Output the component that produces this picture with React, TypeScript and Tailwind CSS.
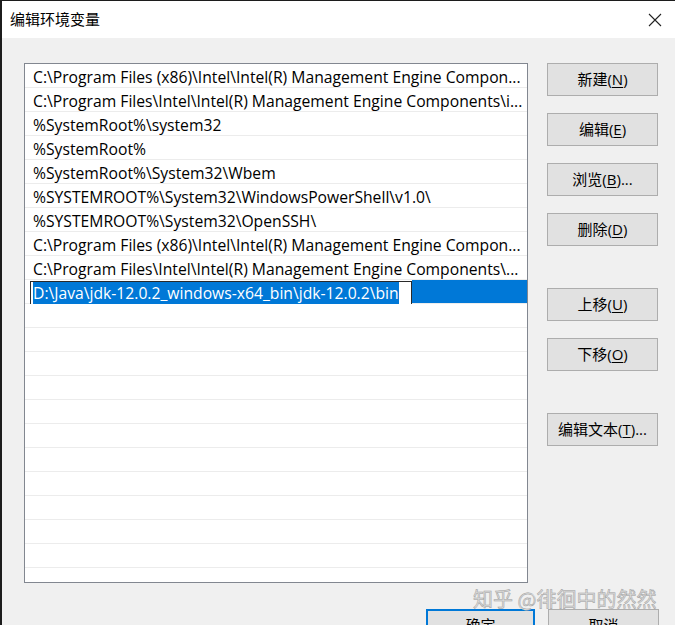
import React from 'react';

const paths = [
  'C:\\Program Files (x86)\\Intel\\Intel(R) Management Engine Compon...',
  'C:\\Program Files\\Intel\\Intel(R) Management Engine Components\\i...',
  '%SystemRoot%\\system32',
  '%SystemRoot%',
  '%SystemRoot%\\System32\\Wbem',
  '%SYSTEMROOT%\\System32\\WindowsPowerShell\\v1.0\\',
  '%SYSTEMROOT%\\System32\\OpenSSH\\',
  'C:\\Program Files (x86)\\Intel\\Intel(R) Management Engine Compon...',
  'C:\\Program Files\\Intel\\Intel(R) Management Engine Components\\...',
];

const font = { fontFamily: '"Open Sans", "Noto Sans CJK SC", sans-serif' };

function WinButton({ label, accel, tail = '', className = '' }: { label: string; accel: string; tail?: string; className?: string }) {
  return (
    <button
      className={`h-[33px] w-[111px] border border-[#adadad] bg-[#e1e1e1] text-[15px] text-black ${className}`}
    >
      {label}(<span className="underline underline-offset-2">{accel}</span>){tail}
    </button>
  );
}

export default function App() {
  return (
    <div
      className="relative w-[675px] h-[625px] overflow-hidden border-l-2 border-t border-[#1c1c1c] bg-[#f0f0f0]"
      style={font}
    >
      {/* title bar */}
      <div className="h-[37px] bg-white flex items-center justify-between pl-[8px] pr-[12px]">
        <span className="text-[15px] text-black">编辑环境变量</span>
        <svg width="14" height="14" viewBox="0 0 14 14" className="mr-[1px]">
          <path d="M1 1 L13 13 M13 1 L1 13" stroke="#222" strokeWidth="1.1" />
        </svg>
      </div>

      <div className="flex pl-[22px] pt-[25px]">
        {/* path list */}
        <div className="w-[504px] h-[520px] border border-[#828790] bg-white overflow-hidden">
          {paths.map((p, i) => (
            <div
              key={i}
              className="h-[24px] border-b border-[#ececec] pl-[8px] pt-[4px] flex items-center text-[15.7px] text-black whitespace-nowrap overflow-hidden"
            >
              {p}
            </div>
          ))}
          <div className="h-[24px] flex border-b border-[#ececec]">
            <div className="w-[5px] bg-white" />
            <div className="h-[23px] mt-[1px] border border-[#2a2a2a] border-b-0 bg-white pl-[2px] pr-[12px] flex items-start">
              <span className="bg-[#0078d7] text-white text-[15.7px] leading-[21px] pt-[1px] whitespace-nowrap">
                D:\Java\jdk-12.0.2_windows-x64_bin\jdk-12.0.2\bin
              </span>
            </div>
            <div className="flex-1 bg-[#0078d7]" />
          </div>
          {Array.from({ length: 12 }).map((_, i) => (
            <div key={i} className="h-[24px] border-b border-[#ececec]" />
          ))}
        </div>

        {/* buttons */}
        <div className="ml-[19px] flex flex-col">
          <WinButton label="新建" accel="N" />
          <WinButton label="编辑" accel="E" className="mt-[17px]" />
          <WinButton label="浏览" accel="B" tail="..." className="mt-[17px]" />
          <WinButton label="删除" accel="D" className="mt-[17px]" />
          <WinButton label="上移" accel="U" className="mt-[42px]" />
          <WinButton label="下移" accel="O" className="mt-[17px]" />
          <WinButton label="编辑文本" accel="T" tail="..." className="mt-[42px]" />
        </div>
      </div>

      {/* bottom buttons */}
      <div className="flex pl-[424px] pt-[26px] gap-[13px]">
        <button className="h-[33px] w-[109px] border-2 border-[#0078d7] bg-[#e1e1e1] text-[15px] text-black">确定</button>
        <button className="h-[33px] w-[111px] border border-[#adadad] bg-[#e1e1e1] text-[15px] text-black">取消</button>
      </div>

      {/* watermark */}
      <div
        className="absolute left-[471px] top-[583px] text-[20px] text-[#dcdcdc] whitespace-nowrap"
        style={{ fontFamily: '"Noto Sans CJK SC", sans-serif', WebkitTextStroke: '0.5px #a0a0a0' }}
      >
        知乎 @徘徊中的然然
      </div>
    </div>
  );
}
